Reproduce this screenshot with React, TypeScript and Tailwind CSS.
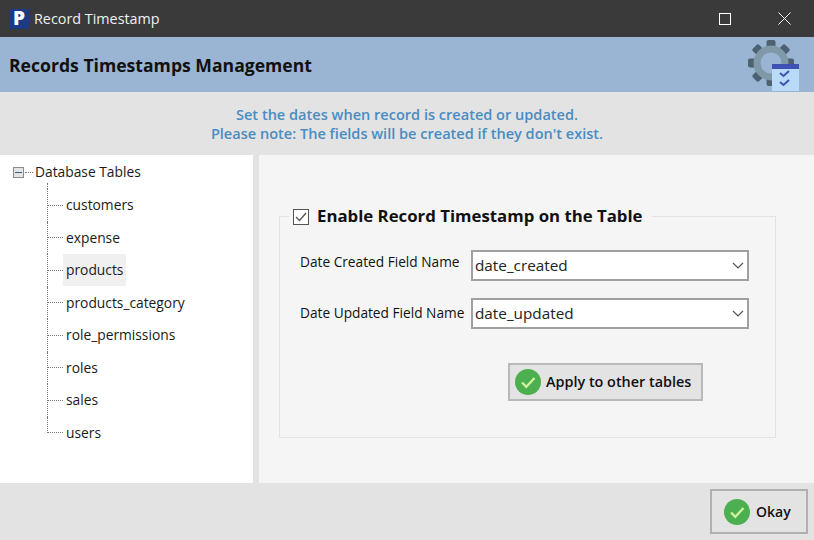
const font = "font-['Open_Sans','Noto_Sans',sans-serif]";

function CheckCircle({ className }: { className?: string }) {
  return (
    <svg viewBox="0 0 26 26" className={className}>
      <circle cx="13" cy="13" r="13" fill="#4caf50" />
      <path d="M7 13.5l4.3 4.3L19.5 9" fill="none" stroke="#d4f5a0" strokeWidth="2.2" />
    </svg>
  );
}

function Chevron() {
  return (
    <svg width="12" height="7" viewBox="0 0 12 7" className="mr-[3px] shrink-0">
      <path d="M1 1l5 5 5-5" fill="none" stroke="#555" strokeWidth="1.2" />
    </svg>
  );
}

function Field({ label, value, labelOffset }: { label: string; value: string; labelOffset: string }) {
  return (
    <div className="flex items-center">
      <span className={`w-[171px] shrink-0 text-[13.7px] text-[#111] whitespace-nowrap ${labelOffset}`}>{label}</span>
      <div className="flex h-[31px] w-[278px] items-center justify-between border-2 border-[#a0a0a0] bg-white pl-[2px]">
        <span className="text-[15.3px] text-[#222]">{value}</span>
        <Chevron />
      </div>
    </div>
  );
}

const tables = ["customers", "expense", "products", "products_category", "role_permissions", "roles", "sales", "users"];

export default function App() {
  return (
    <div className={`flex h-[540px] w-[814px] flex-col overflow-hidden bg-[#f5f5f5] ${font}`}>
      <div className="flex h-[37px] shrink-0 items-center bg-[#3a3a3a] pl-[9px]">
        <div className="flex h-[20px] w-[20px] items-center justify-center rounded-[2px] bg-[#1d3a85] text-[19px] leading-none font-extrabold text-white">P</div>
        <span className="ml-[5px] text-[14.35px] text-[#f0f0f0]">Record Timestamp</span>
        <div className="ml-auto flex items-center">
          <svg width="12" height="12" viewBox="0 0 12 12" className="mr-[47px]">
            <rect x="0.5" y="0.5" width="11" height="11" fill="none" stroke="#fff" />
          </svg>
          <svg width="13" height="13" viewBox="0 0 13 13" className="mr-[23px]">
            <path d="M0.5 0.5l12 12M12.5 0.5l-12 12" fill="none" stroke="#fff" />
          </svg>
        </div>
      </div>

      <div className="flex h-[55px] shrink-0 items-center justify-between bg-[#9ab5d3] pl-[9px] pr-[14px]">
        <span className="translate-y-[1px] text-[17.6px] font-bold text-[#111]">Records Timestamps Management</span>
        <svg width="52" height="52" viewBox="0 0 52 52" className="-translate-x-[1px]">
          <g fill="#4d6170">
            <rect x="19.5" y="1" width="9" height="46" rx="2" />
            <rect x="1" y="19.5" width="46" height="9" rx="2" />
            <rect x="19.5" y="1" width="9" height="46" rx="2" transform="rotate(45 24 24)" />
            <rect x="19.5" y="1" width="9" height="46" rx="2" transform="rotate(-45 24 24)" />
          </g>
          <circle cx="24" cy="24" r="14" fill="#9ab5d3" stroke="#7f99a8" strokeWidth="7" />
          <rect x="25" y="25" width="27" height="27" fill="#b9daf8" />
          <rect x="25" y="25" width="27" height="5" fill="#3f51b5" />
          <path d="M33 34l3.5 3 5.5-5M33 43l3.5 3 5.5-5" fill="none" stroke="#3f51b5" strokeWidth="2" />
        </svg>
      </div>

      <div className="flex h-[63px] shrink-0 flex-col items-center justify-center bg-[#e3e3e3] text-[14.55px] leading-[19px] font-semibold text-[#4a8cc2]">
        <span>Set the dates when record is created or updated.</span>
        <span>Please note: The fields will be created if they don't exist.</span>
      </div>

      <div className="flex min-h-0 flex-1">
        <div className="w-[253px] shrink-0 bg-white pt-[6px] pl-[13px] text-[13.8px] text-[#1a1a1a]">
          <div className="flex h-[22px] items-center">
            <div className="flex h-[11px] w-[11px] items-center justify-center border border-[#8c8c8c] bg-[#e4e4e4]">
              <div className="h-px w-[7px] bg-[#3a5a9a]" />
            </div>
            <div className="ml-px w-[8px] border-t border-dotted border-[#777]" />
            <span className="ml-[2px]">Database Tables</span>
          </div>
          <div className="ml-[34px] h-[6px] border-l border-dotted border-[#777]" />
          <div className="ml-[34px] w-[200px]">
            {tables.map((t, i) => (
              <div key={t} className="flex h-[32.5px] items-center">
                <div className={`w-0 self-start border-l border-dotted border-[#777] ${i === tables.length - 1 ? "h-1/2" : "h-full"}`} />
                <div className="w-[15px] border-t border-dotted border-[#777]" />
                <span className={`px-[3px] py-[6px] leading-[20px] ${t === "products" ? "bg-[#f0f0f0]" : ""}`}>{t}</span>
              </div>
            ))}
          </div>
        </div>

        <div className="w-[6px] shrink-0 bg-[#e3e3e3]" />

        <div className="flex-1 pt-[49px] pl-[20px]">
          <fieldset className="h-[234px] w-[497px] border border-[#e2e2e2] px-[9px] pb-0">
            <legend className="flex items-center gap-[8px] pl-[4px] pr-[9px]">
              <span className="flex h-[16px] w-[16px] items-center justify-center border border-[#555] bg-white">
                <svg width="12" height="10" viewBox="0 0 12 10">
                  <path d="M1 5l3.5 3.5L11 1" fill="none" stroke="#555" strokeWidth="1.3" />
                </svg>
              </span>
              <span className="-translate-y-[1px] text-[16.8px] font-bold text-[#111]">Enable Record Timestamp on the Table</span>
            </legend>
            <div className="mt-[21px] flex flex-col gap-[17px] pl-[11px]">
              <Field label="Date Created Field Name" value="date_created" labelOffset="-translate-y-[3px]" />
              <Field label="Date Updated Field Name" value="date_updated" labelOffset="" />
            </div>
            <button className="mt-[34px] ml-[219px] flex h-[38px] w-[195px] items-center border-2 border-[#b9b9b9] bg-[#e3e3e3] pl-[5px]">
              <CheckCircle className="h-[26px] w-[26px]" />
              <span className="ml-[5px] text-[14.4px] font-semibold text-[#111]">Apply to other tables</span>
            </button>
          </fieldset>
        </div>
      </div>

      <div className="flex h-[57px] shrink-0 items-center justify-end bg-[#e3e3e3] pr-[6px]">
        <button className="flex h-[45px] w-[98px] items-center border-2 border-[#b0b0b0] bg-[#e3e3e3] pl-[12px]">
          <CheckCircle className="h-[26px] w-[26px]" />
          <span className="ml-[6px] text-[14px] font-semibold text-[#111]">Okay</span>
        </button>
      </div>
    </div>
  );
}
